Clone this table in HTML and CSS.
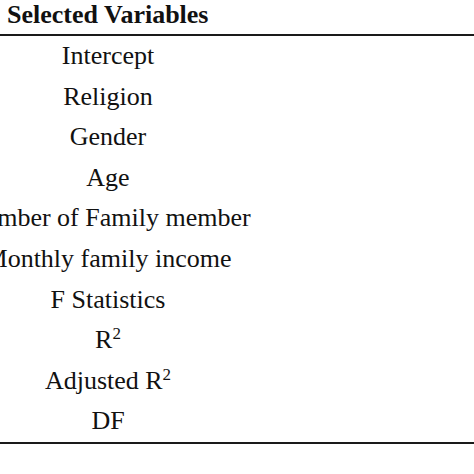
FILE: index.html
```html
<!DOCTYPE html>
<html>
<head>
<meta charset="utf-8">
<link rel="stylesheet" href="styles.css">
</head>
<body>
<div class="table">
  <div class="head">Selected Variables</div>
  <div class="body">
    <div class="row"><span>Intercept</span></div>
    <div class="row"><span>Religion</span></div>
    <div class="row"><span>Gender</span></div>
    <div class="row"><span>Age</span></div>
    <div class="row"><span>Number of Family member</span></div>
    <div class="row"><span>Monthly family income</span></div>
    <div class="row"><span>F Statistics</span></div>
    <div class="row"><span>R<sup>2</sup></span></div>
    <div class="row"><span>Adjusted R<sup>2</sup></span></div>
    <div class="row"><span>DF</span></div>
  </div>
</div>
</body>
</html>
```
FILE: styles.css
```css
html, body {
  margin: 0;
  padding: 0;
  background: #fff;
}
body {
  width: 474px;
  height: 474px;
  overflow: hidden;
  font-family: "Liberation Serif", "Times New Roman", serif;
  color: #111;
}
.table {
  width: 474px;
}
.head {
  box-sizing: border-box;
  height: 36px;
  padding-left: 7px;
  font-size: 26px;
  font-weight: bold;
  line-height: 29px;
  border-bottom: 2px solid #1a1a1a;
}
.body {
  border-bottom: 2px solid #1a1a1a;
}
.row {
  width: 216px;
  height: 40.6px;
  display: flex;
  justify-content: center;
  align-items: center;
  font-size: 26px;
  line-height: 40.6px;
  white-space: nowrap;
}
.row span {
  flex: none;
}
sup {
  font-size: 17px;
  line-height: 0;
  vertical-align: 9px;
}
```
